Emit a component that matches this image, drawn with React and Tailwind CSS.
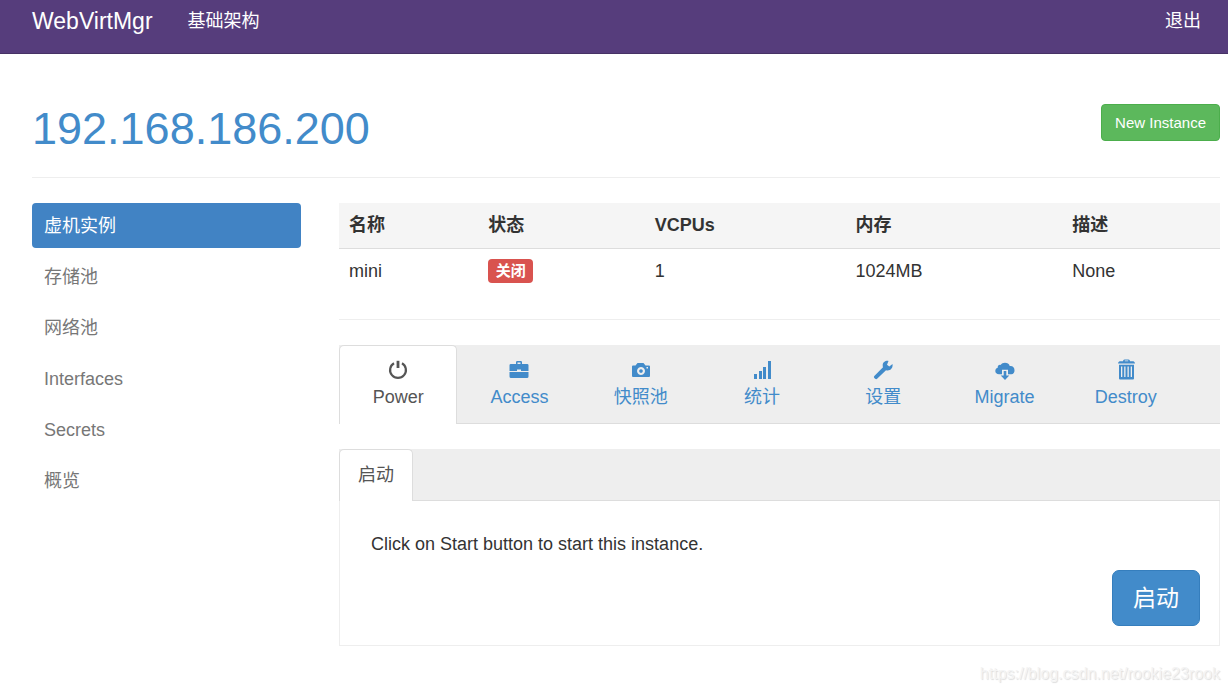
import React from "react";

const icons = {
  power: (
    <g fill="none" stroke="currentColor" strokeWidth="2.2">
      <path d="M6 3.200A7.900 7.900 0 1 0 14 3.200" />
      <path d="M10 .8v7.200" strokeWidth="2.8" />
    </g>
  ),
  briefcase: (
    <path fillRule="evenodd" d="M7 4V2.2Q7 1 8.2 1h3.6Q13 1 13 2.2V4h5.2Q19.500 4 19.500 5.200V11H12v-1.500H8V11H.5V5.200Q.5 4 1.800 4zM8.500 4h3V2.500h-3zM.5 12h19v4.500Q19.500 18 18 18H2Q.5 18 .5 16.500z" />
  ),
  camera: (
    <path fillRule="evenodd" d="M6.500 3h6l2 2.500H18Q19 5.500 19 6.500V16Q19 17 18 17H2Q1 17 1 16V6.500Q1 5.500 2 5.500h2.500zM10 7a4 4 0 1 0 .01 0zM10 9.200a1.800 1.800 0 1 1-.01 0zM15.500 7v1.500h1.500V7z" />
  ),
  signal: (
    <path d="M2 14h3v5H2zM7 11h3v8H7zM11 7h3v12h-3zM16 1h3v18h-3z" />
  ),
  wrench: (
    <path d="M19.500 4 16.300 6.500 14 4.700 15.500.9C12.700.3 9.700 2.100 9.700 5.100c0 .8 0 1.500.3 2.200L1.300 16q-.9.9 0 1.900l.9.900q1 .9 1.900 0L13 10.200c3.800 1.200 7.300-1.900 6.500-6.200z" />
  ),
  cloud: (
    <path d="M7 14.200H4C-.6 14.200-.7 8.500 2.700 7.700 2.500 5.500 4.200 4.300 5.700 4.900 7.400 1.600 14 2 14.700 6 20.800 5.200 20.900 14.200 16.300 14.200H13V9.700H7zM8.700 11h2.600v4.500h3L10 20l-4.300-4.500h3z" />
  ),
  trash: (
    <path fillRule="evenodd" d="M7 1.200Q7 -.6 8.500-.6h4Q14 -.6 14 1.200h3.500Q19 2 19 3.500H2Q2 2 3.500 1.200zM8.800 1.200h3.400V.6H8.800zM3 4.800h15V18.500q0 1-1 1H4q-1 0-1-1zM5 6.500V17h1.300V6.500zM8.200 6.500V17h1.300V6.500zM11.500 6.500V17h1.300V6.500zM14.700 6.500V17H16V6.500z" />
  ),
};

function Icon({ name }) {
  return (
    <svg viewBox="0 0 20 20" className="h-5 w-5 overflow-visible" fill="currentColor" aria-hidden="true">
      {icons[name]}
    </svg>
  );
}

const sections = ["虚机实例", "存储池", "网络池", "Interfaces", "Secrets", "概览"];

const tabs = [
  ["power", "Power"],
  ["briefcase", "Access"],
  ["camera", "快照池"],
  ["signal", "统计"],
  ["wrench", "设置"],
  ["cloud", "Migrate"],
  ["trash", "Destroy"],
];

export default function App() {
  return (
    <div className="min-h-screen bg-white font-['Liberation_Sans','Noto_Sans_CJK_SC',sans-serif] text-lg leading-[26px] text-[#333]">
      <header className="flex h-[54px] items-start border-b border-[#463265] bg-[#563d7c] pr-[27px] pl-8 pt-2 text-white">
        <a href="#home" className="text-[23px] leading-[26px]">WebVirtMgr</a>
        <nav className="flex flex-1 justify-between pl-[35px]">
          <a href="#infra">基础架构</a>
          <a href="#logout">退出</a>
        </nav>
      </header>

      <main className="pr-2 pl-8">
        <div className="flex items-start justify-between border-b border-[#eee] pt-[50px] pb-[23px]">
          <h1 className="text-[45px] leading-[50px] text-[#428bca]">
            <a href="#host">192.168.186.200</a>
          </h1>
          <button className="h-[37px] rounded-[4px] border border-[#4cae4c] bg-[#5cb85c] px-[13px] text-[15px] leading-5 text-white">
            New Instance
          </button>
        </div>

        <div className="flex gap-[38px] pt-[25px]">
          <nav className="flex w-[269px] shrink-0 flex-col gap-[6px]">
            {sections.map((s, i) => (
              <a
                key={s}
                href={"#section-" + i}
                className={
                  "flex h-[45px] items-center rounded-[4px] px-3 " +
                  (i === 0 ? "bg-[#4183c4] text-white" : "text-[#777]")
                }
              >
                {s}
              </a>
            ))}
          </nav>

          <div className="min-w-0 flex-1">
            <table className="w-full table-fixed text-left">
              <colgroup>
                <col className="w-[15.8%]" />
                <col className="w-[18.9%]" />
                <col className="w-[22.8%]" />
                <col className="w-[24.600%]" />
                <col />
              </colgroup>
              <thead>
                <tr className="h-[45px] border-b border-[#ddd] bg-[#f5f5f5]">
                  {["名称", "状态", "VCPUs", "内存", "描述"].map((h) => (
                    <th key={h} className="px-[10px] font-bold">{h}</th>
                  ))}
                </tr>
              </thead>
              <tbody>
                <tr className="h-[45px]">
                  <td className="px-[10px]">mini</td>
                  <td className="px-[10px]">
                    <span className="flex h-6 w-[45px] items-center justify-center rounded-[4px] bg-[#d9534f] text-[15px] font-bold text-white">
                      关闭
                    </span>
                  </td>
                  <td className="px-[10px]">1</td>
                  <td className="px-[10px]">1024MB</td>
                  <td className="px-[10px]">None</td>
                </tr>
              </tbody>
            </table>

            <hr className="mt-[26px] mb-[25px] border-[#eee]" />

            <div className="grid grid-cols-7 gap-[3px] border-b border-[#ddd] bg-[#eee] pr-[35px]" role="tablist">
              {tabs.map(([icon, label], i) => (
                <button
                  key={label}
                  role="tab"
                  aria-selected={i === 0}
                  className={
                    "-mb-px flex h-[79px] flex-col items-center rounded-t-[5px] border border-b-0 pt-[14px] " +
                    (i === 0
                      ? "border-[#ddd] bg-white text-[#555]"
                      : "border-transparent text-[#428bca]")
                  }
                >
                  <Icon name={icon} />
                  <span className="mt-1 leading-[26px]">{label}</span>
                </button>
              ))}
            </div>

            <div className="mt-[25px] flex border-b border-[#ddd] bg-[#eee]" role="tablist">
              <button
                role="tab"
                aria-selected="true"
                className="-mb-px h-[52px] rounded-t-[5px] border border-b-0 border-[#ddd] bg-white px-[18px] pb-[2px] text-[#555]"
              >
                启动
              </button>
            </div>
            <section className="flex flex-col border border-t-0 border-[#eee] px-[19px] pt-[30px] pb-[19px]">
              <p className="pl-3">Click on Start button to start this instance.</p>
              <button className="mt-[13px] h-14 self-end rounded-[7px] border border-[#357ebd] bg-[#428bca] px-5 text-[23px] leading-[30px] text-white">
                启动
              </button>
            </section>
          </div>
        </div>
        <footer className="pt-[18px] text-right text-base leading-5 text-[#f4f4f4] [text-shadow:1px_1px_1px_#ddd]">
          https://blog.csdn.net/rookie23rook
        </footer>
      </main>
    </div>
  );
}
